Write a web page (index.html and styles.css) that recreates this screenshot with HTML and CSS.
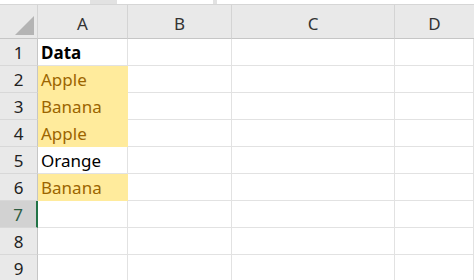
FILE: index.html
```html
<!DOCTYPE html>
<html lang="en">
<head>
    <meta charset="UTF-8">
    <title>Sheet</title>
    <link rel="stylesheet" href="styles.css">
</head>
<body>
<div class="topbar">
    <div class="box box-name"></div>
    <div class="box box-mid"></div>
    <div class="box box-formula"></div>
</div>

<div class="sheet">
    <!-- column headers -->
    <div class="corner"><span class="tri"></span></div>
    <div class="colhead">A</div>
    <div class="colhead">B</div>
    <div class="colhead">C</div>
    <div class="colhead last">D</div>

    <div class="rowhead">1</div>
    <div class="cell bold">Data</div><div class="cell"></div><div class="cell"></div><div class="cell"></div>

    <div class="rowhead">2</div>
    <div class="cell dup">Apple</div><div class="cell"></div><div class="cell"></div><div class="cell"></div>

    <div class="rowhead">3</div>
    <div class="cell dup">Banana</div><div class="cell"></div><div class="cell"></div><div class="cell"></div>

    <div class="rowhead">4</div>
    <div class="cell dup">Apple</div><div class="cell"></div><div class="cell"></div><div class="cell"></div>

    <div class="rowhead">5</div>
    <div class="cell">Orange</div><div class="cell"></div><div class="cell"></div><div class="cell"></div>

    <div class="rowhead">6</div>
    <div class="cell dup">Banana</div><div class="cell"></div><div class="cell"></div><div class="cell"></div>

    <div class="rowhead active">7</div>
    <div class="cell"></div><div class="cell"></div><div class="cell"></div><div class="cell"></div>

    <div class="rowhead">8</div>
    <div class="cell"></div><div class="cell"></div><div class="cell"></div><div class="cell"></div>

    <div class="rowhead">9</div>
    <div class="cell"></div><div class="cell"></div><div class="cell"></div><div class="cell"></div>
</div>
</body>
</html>
```

FILE: styles.css
```css
body {
    margin: 0;
    background: #fff;
    font-family: 'Noto Sans', 'Open Sans', sans-serif;
    width: 474px;
    height: 280px;
    overflow: hidden;
}
.topbar {
    display: flex;
    height: 4px;
    background: #e2e2e2;
    border-bottom: 1px solid #d6d6d6;
}
.box {
    background: #fff;
}
.box-name {
    width: 90px;
}
.box-mid {
    width: 96px;
    margin-left: 27px;
}
.box-formula {
    flex: 1;
    margin-left: 4px;
}
.sheet {
    display: grid;
    grid-template-columns: 38px 90px 104px 163px 79px;
    grid-template-rows: 34px;
    grid-auto-rows: 27px;
}
.corner, .colhead, .rowhead {
    background: #e9e9e9;
    color: #333;
    box-sizing: border-box;
}
.corner {
    position: relative;
    border-right: 1px solid #d4d4d4;
    border-bottom: 1px solid #c6c6c6;
}
.tri {
    position: absolute;
    right: 3px;
    bottom: 3px;
    width: 0;
    height: 0;
    border-left: 19px solid transparent;
    border-bottom: 19px solid #b4b4b4;
}
.colhead {
    display: flex;
    justify-content: center;
    align-items: flex-end;
    padding-bottom: 3px;
    font-size: 17px;
    border-right: 1px solid #d4d4d4;
    border-bottom: 1px solid #c6c6c6;
}
.colhead.last {
    border-right: none;
}
.rowhead {
    display: flex;
    justify-content: center;
    align-items: center;
    font-size: 17px;
    color: #222;
    border-right: 1px solid #c6c6c6;
    border-bottom: 1px solid #d8d8d8;
}
.rowhead.active {
    background: #d2d2d2;
    color: #2e5d42;
    border-right: 2px solid #217346;
}
.cell {
    display: flex;
    align-items: center;
    padding-left: 3px;
    font-size: 17px;
    color: #000;
    box-sizing: border-box;
    border-right: 1px solid #e2e2e2;
    border-bottom: 1px solid #e2e2e2;
    white-space: nowrap;
}
.cell.bold {
    font-weight: bold;
}
.cell.dup {
    background: #ffeb9c;
    color: #9c6500;
    border-right-color: #ffeb9c;
    border-bottom-color: #ffeb9c;
}
```
